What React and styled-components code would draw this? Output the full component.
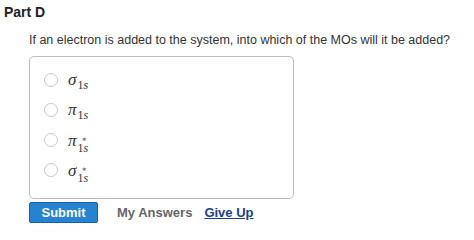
import React from 'react';
import styled, { createGlobalStyle } from 'styled-components';

const Global = createGlobalStyle`
  body {
    margin: 0;
    background: #fff;
    font-family: "Liberation Sans", Arial, sans-serif;
    color: #222;
  }
`

const options = [
  { id: 'a', base: 'σ', star: false },
  { id: 'b', base: 'π', star: false },
  { id: 'c', base: 'π', star: true },
  { id: 'd', base: 'σ', star: true },
]

const Index = () => (
  <>
    <Upright>1</Upright>s
  </>
)

const Symbol = ({ base, star }) => (
  <MathText>
    <Greek>{base}</Greek>
    {star ? (
      <Stack>
        <Sup>∗</Sup>
        <Sub><Index /></Sub>
      </Stack>
    ) : (
      <Low><Index /></Low>
    )}
  </MathText>
)

const App = () => {
  return (
    <>
      <Global />
      <Page>
        <Heading>Part D</Heading>
        <Body>
          <Question>If an electron is added to the system, into which of the MOs will it be added?</Question>
          <Choices>
            {options.map(o => (
              <Choice key={o.id}>
                <Radio type="radio" name="mo" />
                <Symbol base={o.base} star={o.star} />
              </Choice>
            ))}
          </Choices>
          <Actions>
            <Submit>Submit</Submit>
            <Muted>My Answers</Muted>
            <GiveUp href="#">Give Up</GiveUp>
          </Actions>
        </Body>
      </Page>
    </>
  )
}

//Styles
const Page = styled.div`
  padding: 4px 0 0 4px;
`
const Heading = styled.h2`
  margin: 0;
  font-size: 14px;
  font-weight: bold;
  line-height: 17px;
  color: #222;
`
const Body = styled.div`
  padding-left: 25px;
`
const Question = styled.p`
  margin: 11px 0 0;
  font-size: 12.5px;
  line-height: 16px;
  white-space: nowrap;
  color: #333;
`
const Choices = styled.div`
  margin-top: 8px;
  width: 265px;
  height: 143px;
  box-sizing: border-box;
  border: 1px solid #bdbdbd;
  border-radius: 5px;
  padding: 13px 0 0 14px;
  display: flex;
  flex-direction: column;
  gap: 10px;
`
const Choice = styled.label`
  display: flex;
  align-items: center;
  height: 20px;
  gap: 10px;
`
const Radio = styled.input`
  appearance: none;
  margin: 0;
  width: 14px;
  height: 14px;
  border-radius: 50%;
  border: 1px solid #c8c8c8;
  background: #fff;
`
const MathText = styled.span`
  display: inline-flex;
  align-items: flex-end;
  font-family: "Liberation Serif", "DejaVu Serif", serif;
  font-style: italic;
  color: #333;
`
const Greek = styled.span`
  font-size: 17px;
  line-height: 16px;
`
const Upright = styled.span`
  font-style: normal;
`
const Low = styled.span`
  font-size: 12px;
  line-height: 11px;
  margin-left: 1px;
  position: relative;
  top: 3px;
`
const Stack = styled.span`
  display: inline-flex;
  flex-direction: column;
  margin-left: 1px;
  font-size: 12px;
  position: relative;
  top: 5px;
`
const Sup = styled.span`
  padding-left: 4px;
  font-style: normal;
  font-size: 8px;
  line-height: 7px;
`
const Sub = styled.span`
  line-height: 11px;
`
const Actions = styled.div`
  margin-top: 3px;
  display: flex;
  align-items: center;
`
const Submit = styled.button`
  width: 69px;
  height: 21px;
  padding: 0;
  border: 1px solid #1463a8;
  border-radius: 2px;
  background: #2583cf;
  color: #fff;
  font-family: "Liberation Sans", Arial, sans-serif;
  font-weight: bold;
  font-size: 13px;
`
const Muted = styled.span`
  margin-left: 19px;
  font-size: 13px;
  font-weight: bold;
  color: #666;
`
const GiveUp = styled.a`
  margin-left: 12px;
  font-size: 13px;
  font-weight: bold;
  color: #1b3f8f;
`

export default App
